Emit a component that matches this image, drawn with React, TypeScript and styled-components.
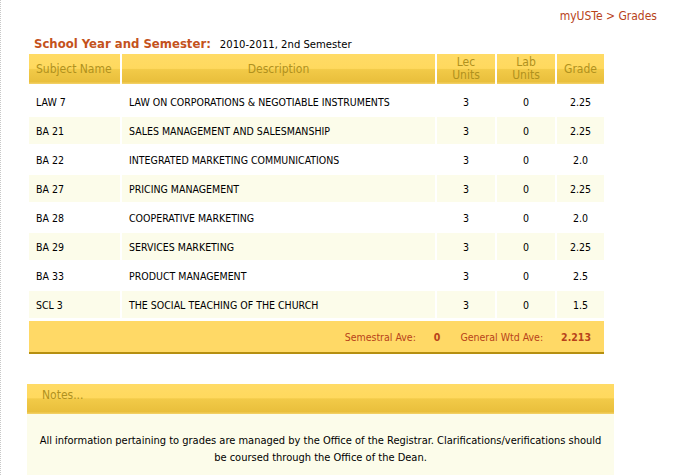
import React from "react";
import styled, { createGlobalStyle } from "styled-components";

const Global = createGlobalStyle`
  html, body { margin: 0; padding: 0; background: #fff; }
  body { font-family: "DejaVu Sans Condensed", "DejaVu Sans", "Liberation Sans", sans-serif; }
`;

const Page = styled.div`
  width: 689px;
  height: 475px;
  overflow: hidden;
  box-sizing: border-box;
  border-left: 1px dotted #c8c8c8;
`;

const Breadcrumb = styled.div`
  display: flex;
  justify-content: flex-end;
  padding: 9px 32px 0 0;
  height: 20px;
  font-size: 12px;
  color: #b8431a;
`;

const TitleRow = styled.div`
  display: flex;
  align-items: baseline;
  gap: 9px;
  margin: 7px 0 0 33px;
  height: 16px;
`;

const TitleLabel = styled.span`
  font-size: 13px;
  font-weight: bold;
  color: #c4521c;
`;

const TitleValue = styled.span`
  font-size: 11.2px;
  color: #000;
`;

const Panel = styled.div`
  margin: 0 0 0 26px;
  width: 579px;
`;

const Table = styled.table`
  width: 579px;
  border-collapse: separate;
  border-spacing: 2px;
  table-layout: fixed;
  font-size: 10.5px;
  color: #000;
`;

const Th = styled.th<{ $w: number; $align?: string }>`
  box-sizing: border-box;
  width: ${(p) => p.$w}px;
  height: 32px;
  padding: 0 0 0 ${(p) => (p.$align === "left" ? "7px" : "0")};
  font-weight: normal;
  font-size: 12px;
  line-height: 13px;
  color: #b0911e;
  text-align: ${(p) => p.$align || "center"};
  border-bottom: 2px solid #fff;
  background: linear-gradient(
    to bottom,
    #ffdb66 0%,
    #ffd95e 48%,
    #f2ca48 52%,
    #e9bf3c 92%,
    #f5d36b 100%
  );
`;

const Tr = styled.tr<{ $alt: boolean }>`
  & > td {
    background: ${(p) => (p.$alt ? "#fcfcea" : "#ffffff")};
  }
`;

const Td = styled.td<{ $center?: boolean }>`
  box-sizing: border-box;
  height: 27px;
  padding: 0 0 0 ${(p) => (p.$center ? "0" : "7px")};
  text-align: ${(p) => (p.$center ? "center" : "left")};
  white-space: nowrap;
  overflow: hidden;
`;

const Footer = styled.div`
  margin: 1px 2px 0;
  height: 31px;
  background: #ffd966;
  border-bottom: 2px solid #b58f10;
  display: flex;
  justify-content: flex-end;
  align-items: center;
  padding-right: 13px;
  font-size: 10.5px;
  color: #b8431a;
`;

const FootLabel = styled.span`
  margin-left: 20px;
`;

const FootValue = styled.span`
  margin-left: 18px;
  font-weight: bold;
`;

const Notes = styled.div`
  margin: 30px 0 0 26px;
  width: 587px;
`;

const NotesHead = styled.div`
  height: 30px;
  box-sizing: border-box;
  padding: 4px 0 0 15px;
  font-size: 12px;
  color: #b0911e;
  background: linear-gradient(
    to bottom,
    #ffdb66 0%,
    #ffd95e 45%,
    #f2ca48 50%,
    #e9bf3c 92%,
    #f5d36b 100%
  );
`;

const NotesBody = styled.div`
  background: #fcfcea;
  padding: 18px 6px 20px;
  text-align: center;
  font-size: 11px;
  line-height: 17px;
  color: #000;
`;

const rows = [
  ["LAW 7", "LAW ON CORPORATIONS & NEGOTIABLE INSTRUMENTS", "3", "0", "2.25"],
  ["BA 21", "SALES MANAGEMENT AND SALESMANSHIP", "3", "0", "2.25"],
  ["BA 22", "INTEGRATED MARKETING COMMUNICATIONS", "3", "0", "2.0"],
  ["BA 27", "PRICING MANAGEMENT", "3", "0", "2.25"],
  ["BA 28", "COOPERATIVE MARKETING", "3", "0", "2.0"],
  ["BA 29", "SERVICES MARKETING", "3", "0", "2.25"],
  ["BA 33", "PRODUCT MANAGEMENT", "3", "0", "2.5"],
  ["SCL 3", "THE SOCIAL TEACHING OF THE CHURCH", "3", "0", "1.5"],
];

export default function App() {
  return (
    <>
      <Global />
      <Page>
        <Breadcrumb>myUSTe &gt; Grades</Breadcrumb>
        <TitleRow>
          <TitleLabel>School Year and Semester:</TitleLabel>
          <TitleValue>2010-2011, 2nd Semester</TitleValue>
        </TitleRow>
        <Panel>
          <Table>
            <thead>
              <tr>
                <Th $w={91} $align="left">Subject Name</Th>
                <Th $w={313}>Description</Th>
                <Th $w={58}>Lec<br />Units</Th>
                <Th $w={58}>Lab<br />Units</Th>
                <Th $w={47}>Grade</Th>
              </tr>
            </thead>
            <tbody>
              {rows.map((r, i) => (
                <Tr key={r[0]} $alt={i % 2 === 1}>
                  <Td>{r[0]}</Td>
                  <Td>{r[1]}</Td>
                  <Td $center>{r[2]}</Td>
                  <Td $center>{r[3]}</Td>
                  <Td $center>{r[4]}</Td>
                </Tr>
              ))}
            </tbody>
          </Table>
          <Footer>
            <span>Semestral Ave:</span>
            <FootValue>0</FootValue>
            <FootLabel>General Wtd Ave:</FootLabel>
            <FootValue>2.213</FootValue>
          </Footer>
        </Panel>
        <Notes>
          <NotesHead>Notes...</NotesHead>
          <NotesBody>
            All information pertaining to grades are managed by the Office of the Registrar. Clarifications/verifications should
            be coursed through the Office of the Dean.
          </NotesBody>
        </Notes>
      </Page>
    </>
  );
}
